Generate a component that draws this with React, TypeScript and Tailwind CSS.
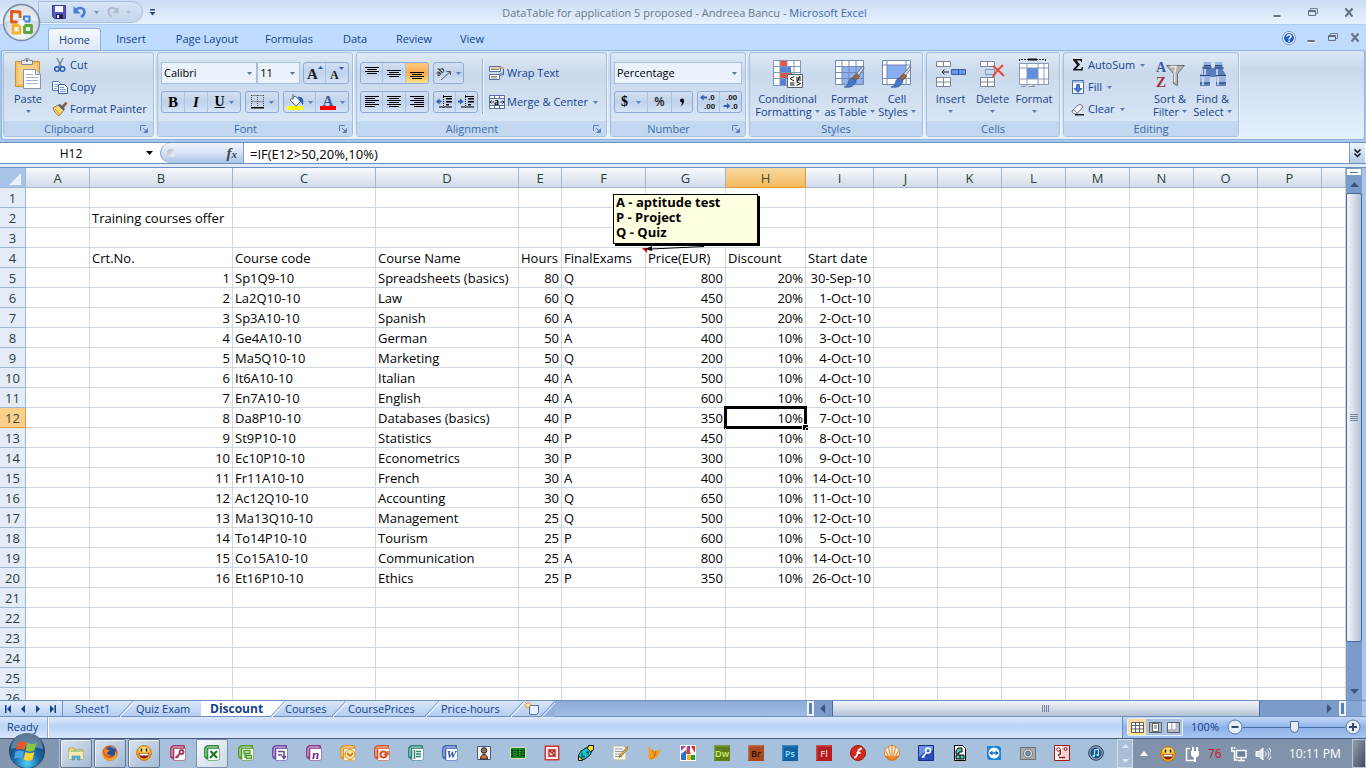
import { useState } from "react";
import type { ReactNode } from "react";

const ribbonTabs = [
  { label: "Home", width: "w-[53px]" },
  { label: "Insert", width: "w-[60px]" },
  { label: "Page Layout", width: "w-[92px]" },
  { label: "Formulas", width: "w-[72px]" },
  { label: "Data", width: "w-[60px]" },
  { label: "Review", width: "w-[58px]" },
  { label: "View", width: "w-[58px]" },
];

const columns = [
  { name: "A", width: "w-16" },
  { name: "B", width: "w-[143px]" },
  { name: "C", width: "w-[143px]" },
  { name: "D", width: "w-[143px]" },
  { name: "E", width: "w-[43px]" },
  { name: "F", width: "w-[84px]" },
  { name: "G", width: "w-20" },
  { name: "H", width: "w-20" },
  { name: "I", width: "w-[68px]" },
  { name: "J", width: "w-16" },
  { name: "K", width: "w-16" },
  { name: "L", width: "w-16" },
  { name: "M", width: "w-16" },
  { name: "N", width: "w-16" },
  { name: "O", width: "w-16" },
  { name: "P", width: "w-16" },
  { name: "", width: "w-auto" },
];

const courses = [
  ["1", "Sp1Q9-10", "Spreadsheets (basics)", "80", "Q", "800", "20%", "30-Sep-10"],
  ["2", "La2Q10-10", "Law", "60", "Q", "450", "20%", "1-Oct-10"],
  ["3", "Sp3A10-10", "Spanish", "60", "A", "500", "20%", "2-Oct-10"],
  ["4", "Ge4A10-10", "German", "50", "A", "400", "10%", "3-Oct-10"],
  ["5", "Ma5Q10-10", "Marketing", "50", "Q", "200", "10%", "4-Oct-10"],
  ["6", "It6A10-10", "Italian", "40", "A", "500", "10%", "4-Oct-10"],
  ["7", "En7A10-10", "English", "40", "A", "600", "10%", "6-Oct-10"],
  ["8", "Da8P10-10", "Databases (basics)", "40", "P", "350", "10%", "7-Oct-10"],
  ["9", "St9P10-10", "Statistics", "40", "P", "450", "10%", "8-Oct-10"],
  ["10", "Ec10P10-10", "Econometrics", "30", "P", "300", "10%", "9-Oct-10"],
  ["11", "Fr11A10-10", "French", "30", "A", "400", "10%", "14-Oct-10"],
  ["12", "Ac12Q10-10", "Accounting", "30", "Q", "650", "10%", "11-Oct-10"],
  ["13", "Ma13Q10-10", "Management", "25", "Q", "500", "10%", "12-Oct-10"],
  ["14", "To14P10-10", "Tourism", "25", "P", "600", "10%", "5-Oct-10"],
  ["15", "Co15A10-10", "Communication", "25", "A", "800", "10%", "14-Oct-10"],
  ["16", "Et16P10-10", "Ethics", "25", "P", "350", "10%", "26-Oct-10"],
];

const headings = ["Crt.No.", "Course code", "Course Name", "Hours", "FinalExams", "Price(EUR)", "Discount", "Start date"];

// columns B, E, G, H and I hold numbers or dates
const rightAligned = [1, 4, 6, 7, 8];

function cellText(row: number, col: number) {
  if (row === 2 && col === 1) return "Training courses offer";
  if (row === 4) return headings[col - 1] ?? "";
  if (row >= 5 && row <= 20) return courses[row - 5][col - 1] ?? "";
  return "";
}

function Svg({ w = 16, h = 16, className = "", children }: { w?: number; h?: number; className?: string; children: ReactNode }) {
  return (
    <svg width={w} height={h} viewBox={`0 0 ${w} ${h}`} className={`shrink-0 ${className}`} aria-hidden="true">
      {children}
    </svg>
  );
}

function Caret({ color = "#5b7fb5" }: { color?: string }) {
  return (
    <Svg w={5} h={3}>
      <path d="M0 0h5L2.500 3z" fill={color} />
    </Svg>
  );
}

/* ---------- window chrome ---------- */

function OfficeButton() {
  return (
    <button type="button" aria-label="Office Button" className="absolute left-0.5 top-[3px] z-10">
      <Svg w={39} h={39}>
        <defs>
          <radialGradient id="orb" cx="50%" cy="75%" r="75%">
            <stop offset="0" stopColor="#ffffff" />
            <stop offset="0.5" stopColor="#d9e0ea" />
            <stop offset="1" stopColor="#aab8cc" />
          </radialGradient>
        </defs>
        <circle cx="19.500" cy="19.500" r="18" fill="url(#orb)" stroke="#7c8ba5" strokeWidth="1.500" />
        <path d="M3 19a16.500 16.500 0 0 1 33 0c-8-4-25-4-33 0z" fill="#fff" opacity="0.55" />
        <g fill="none" strokeWidth="2.800" strokeLinejoin="round">
          <path d="M18 15V9l-8.500-.500V19h6" stroke="#dd5a1b" />
          <path d="M22 18.500v-5h5.500v5z" stroke="#3f86d4" strokeWidth="2.200" />
          <path d="M11 22.500h7v7.500h-7z" stroke="#f4b32c" />
          <path d="M22.500 22.500h7v7h-7z" stroke="#5da63a" />
        </g>
        <path d="M17.500 17.500h5v5h-5z" fill="#fff" />
      </Svg>
    </button>
  );
}

function WindowControls({ small = false }: { small?: boolean }) {
  return (
    <div className={small ? "flex items-center gap-2.5" : "flex items-center gap-6"}>
      <button type="button" aria-label="Minimize">
        <Svg w={12} h={11}>
          <path d="M2.500 8h7v2h-7z" fill="#666f7d" />
          <path d="M2.500 10h7v1h-7z" fill="#fff" />
        </Svg>
      </button>
      <button type="button" aria-label="Restore">
        <Svg w={12} h={11}>
          <path d="M3.500 3.500v-2h7v5h-2" fill="none" stroke="#77808e" />
          <path d="M1.500 3.500h7v5h-7zM1.500 4.500h7" fill="none" stroke="#666f7d" />
        </Svg>
      </button>
      <button type="button" aria-label="Close">
        <Svg w={12} h={11}>
          <path d="M2.500 1.500l7 8M9.500 1.500l-7 8" stroke="#666f7d" strokeWidth="2" />
        </Svg>
      </button>
    </div>
  );
}

function TitleBar() {
  return (
    <div className="flex h-[25px] shrink-0 items-center border-b border-[#a9cdf2] bg-linear-to-b from-[#cbddf6] to-[#e6f1fd]">
      <div className="flex w-[165px] shrink-0 items-center">
        <div className="ml-[38px] flex h-[22px] w-[105px] items-center rounded-r-full border border-[#a9bfdc] bg-linear-to-b from-[#d6e4f6] to-[#c4d6ee] pl-[13px]">
          <button type="button" aria-label="Save">
            <Svg w={14} h={14}>
              <path d="M0.500 0.500h13v13h-11l-2-2z" fill="#5a59c4" stroke="#3a3a93" />
              <path d="M3 1h8v6H3z" fill="#f4f7ff" />
              <path d="M4 9h7v5H4z" fill="#23234f" />
              <path d="M5 10h2v3H5z" fill="#e8ebf5" />
            </Svg>
          </button>
          <button type="button" aria-label="Undo" className="ml-[7px]">
            <Svg w={14} h={14}>
              <path d="M3 4.500c3-2.500 8.500-2 8.500 2.500 0 2.500-2 4-3.500 5" fill="none" stroke="#4b7bd0" strokeWidth="2.500" />
              <path d="M0.500 1v7.500h7z" fill="#4b7bd0" />
            </Svg>
          </button>
          <button type="button" aria-label="Undo list" className="ml-[7px]">
            <Caret color="#6f8fbd" />
          </button>
          <button type="button" aria-label="Redo" className="ml-[7px]">
            <Svg w={14} h={14}>
              <path d="M10.500 4.500c-3-2.500-8-2-8 2 0 2.500 1.500 4 3 5" fill="none" stroke="#b0bccd" strokeWidth="2" />
              <path d="M12.500 1.500v6.500H6.500z" fill="#b0bccd" />
            </Svg>
          </button>
          <button type="button" aria-label="Redo list" className="ml-1.5">
            <Caret color="#b0bccd" />
          </button>
        </div>
        <button type="button" aria-label="Customize Quick Access Toolbar" className="ml-1.5">
          <Svg w={7} h={7}>
            <path d="M1 0h5v1.500H1zM0.500 3h6L3.500 6.500z" fill="#2c4a86" />
          </Svg>
        </button>
      </div>
      <h1 className="flex-1 truncate pt-0.5 text-center text-[11px] leading-4 text-[#6d7786]">
        DataTable for application 5 proposed - Andreea Bancu - <span className="text-[#3e6aaa]">Microsoft Excel</span>
      </h1>
      <div className="flex w-[162px] shrink-0 justify-end pr-[11px]">
        <WindowControls />
      </div>
    </div>
  );
}

function TabStrip() {
  return (
    <div className="flex h-[25px] shrink-0 items-end justify-between bg-[#bfdbff] pl-12">
      <div role="tablist" className="flex h-[22px]">
        {ribbonTabs.map((tab, i) => (
          <button
            key={tab.label}
            type="button"
            role="tab"
            aria-selected={i === 0}
            className={`${tab.width} text-center text-[11px] leading-5 ${
              i === 0
                ? "rounded-t-[3px] border border-b-0 border-[#8db2e3] bg-linear-to-b from-[#f4f9ff] to-[#dde8f5] text-[#15428b] shadow-[inset_0_1px_0_#fff]"
                : "text-[#15428b]"
            }`}
          >
            {tab.label}
          </button>
        ))}
      </div>
      <div className="flex h-full items-center gap-[9px] pr-[5px]">
        <button type="button" aria-label="Help">
          <Svg w={14} h={14}>
            <circle cx="7" cy="7" r="6.500" fill="#fff" stroke="#6c93cf" />
            <circle cx="7" cy="7" r="5" fill="#1f5fc9" />
            <path d="M5 5.500c0-2.500 4-2.500 4 0 0 1.300-2 1.500-2 3" fill="none" stroke="#fff" strokeWidth="1.500" />
            <path d="M6.250 9.500h1.500V11h-1.500z" fill="#fff" />
          </Svg>
        </button>
        <WindowControls small />
      </div>
    </div>
  );
}

/* ---------- ribbon ---------- */

function Group({ title, width, launcher = false, children }: { title: string; width: string; launcher?: boolean; children: ReactNode }) {
  return (
    <section
      aria-label={title}
      className={`${width} flex shrink-0 flex-col overflow-hidden rounded-[3px] border border-[#a5bfdd] bg-linear-to-b from-[#dfe9f5] via-[#c9d9ec] via-25% to-[#dce9f8] shadow-[1px_1px_0_#eef5fd]`}
    >
      <div className="flex min-h-0 flex-1 items-start">{children}</div>
      <div className="flex h-[15px] shrink-0 items-center bg-[#c1d8f0]">
        <span className="flex-1 text-center text-[11px] leading-[15px] text-[#3e6aaa]">{title}</span>
        {launcher && (
          <button type="button" aria-label={`${title} options`} className="ml-1.5 mr-[5px]">
            <Svg w={8} h={8}>
              <path d="M0.500 6V0.500H6" fill="none" stroke="#5f7fb0" />
              <path d="M3 3l3 3M7.500 3.500v4h-4" fill="none" stroke="#5f7fb0" />
              <path d="M7 4v3H4z" fill="#5f7fb0" />
            </Svg>
          </button>
        )}
      </div>
    </section>
  );
}

function Cluster({ children }: { children: ReactNode }) {
  return (
    <div className="flex h-[22px] shrink-0 divide-x divide-[#a9c3e2] overflow-hidden rounded-[3px] border border-[#8fabd3] bg-linear-to-b from-[#d3e1f2] via-[#bfd2ea] to-[#d5e4f7]">
      {children}
    </div>
  );
}

function ToolButton({ label, width, active = false, children }: { label: string; width: string; active?: boolean; children: ReactNode }) {
  return (
    <button
      type="button"
      aria-label={label}
      className={`${width} flex h-full items-center justify-center gap-1 ${active ? "bg-linear-to-b from-[#fcc883] via-[#fbab45] to-[#fee08b]" : ""}`}
    >
      {children}
    </button>
  );
}

function SmallButton({ label, caret = false, children }: { label: string; caret?: boolean; children: ReactNode }) {
  return (
    <button type="button" className="flex h-[22px] items-center text-[11px] whitespace-nowrap text-[#15428b]">
      {children}
      <span className="ml-0.5">{label}</span>
      {caret && (
        <span className="ml-[5px]">
          <Caret />
        </span>
      )}
    </button>
  );
}

function BigButton({ lines, width, children }: { lines: string[]; width: string; children: ReactNode }) {
  return (
    <button type="button" className={`${width} flex shrink-0 flex-col items-center pt-[3px] text-[11px] leading-[13px] text-[#15428b]`}>
      <span className="flex h-9 items-center">{children}</span>
      <span className="whitespace-nowrap">{lines[0]}</span>
      <span className="flex h-[13px] items-center gap-[3px] whitespace-nowrap">
        {lines[1]}
        <Caret />
      </span>
    </button>
  );
}

function DropDown({ label, value, width }: { label: string; value: string; width: string }) {
  return (
    <div className={`${width} relative flex h-[22px] items-center border border-[#a9c1de] bg-[#eaf2fb]`}>
      <select aria-label={label} defaultValue={value} className="h-full w-full appearance-none bg-transparent pl-0.5 text-[11px] text-black outline-none">
        <option>{value}</option>
      </select>
      <span className="pointer-events-none absolute inset-y-0 right-1 flex items-center">
        <Caret color="#55749f" />
      </span>
    </div>
  );
}

function Lines({ rows }: { rows: number[][] }) {
  return (
    <Svg w={16} h={14}>
      {rows.map(([x, y, w]) => (
        <path key={y} d={`M${x} ${y}h${w}v1h-${w}z`} fill="#000" />
      ))}
    </Svg>
  );
}

function ClipboardGroup() {
  return (
    <Group title="Clipboard" width="w-[151px]" launcher>
      <BigButton lines={["Paste", ""]} width="w-[48px]">
        <Svg w={28} h={32}>
          <path d="M1.500 3.500h24v25h-24z" fill="#f3c063" stroke="#c98f34" />
          <path d="M4 6h19v20H4z" fill="#f8d084" />
          <path d="M7.500 2.500h3c0-3 5-3 5 0h3v4h-11z" fill="#e8ebf0" stroke="#7d8796" />
          <circle cx="13" cy="2.500" r="1.200" fill="#5a6473" />
          <path d="M9.500 11.500h12l5 5v14h-17z" fill="#fff" stroke="#8794ab" />
          <path d="M21.500 11.500v5h5" fill="#dce5f2" stroke="#8794ab" />
          <path d="M12 16.500h7M12 19.500h12M12 22.500h12M12 25.500h12" stroke="#9fb3d3" />
        </Svg>
      </BigButton>
      <div className="flex flex-col pt-px">
        <SmallButton label="Cut">
          <Svg>
            <path d="M5 1l4.500 9M11 1L6.500 10" stroke="#76869c" strokeWidth="1.500" />
            <circle cx="5" cy="12" r="2.300" fill="none" stroke="#2f5eb5" strokeWidth="1.500" />
            <circle cx="10.500" cy="12" r="2.300" fill="none" stroke="#2f5eb5" strokeWidth="1.500" />
          </Svg>
        </SmallButton>
        <SmallButton label="Copy">
          <Svg>
            <path d="M0.500 2.500h6l2 2v7h-8z" fill="#fff" stroke="#4b74b8" />
            <path d="M2 5.500h4M2 7.500h4M2 9.500h3" stroke="#8fadd9" />
            <path d="M6.500 5.500h6l3 3v6h-9z" fill="#fff" stroke="#345c9f" />
            <path d="M8 8.500h4M8 10.500h6M8 12.500h6" stroke="#6f93cb" />
          </Svg>
        </SmallButton>
        <SmallButton label="Format Painter">
          <Svg>
            <path d="M1 7l5-3 6 5-5 6c-2-1-5-4-6-8z" fill="#f3d572" stroke="#9b7a2b" />
            <path d="M3 8l4 5" stroke="#c79e38" />
            <path d="M6 4l2-1 5 5-1.500 1.500z" fill="#49597b" />
            <path d="M9.500 5l4-4 2 1-3.500 5z" fill="#8c5b33" />
          </Svg>
        </SmallButton>
      </div>
    </Group>
  );
}

function FontGroup() {
  return (
    <Group title="Font" width="w-[196px]" launcher>
      <div className="flex w-full flex-col gap-[7px] px-[3px] pt-[9px]">
        <div className="flex">
          <DropDown label="Font" value="Calibri" width="w-[97px]" />
          <DropDown label="Font size" value="11" width="w-[43px]" />
          <div className="ml-[3px]">
            <Cluster>
              <ToolButton label="Grow font" width="w-[22px]">
                <Svg w={20} h={18}>
                  <text x="2" y="15" fontSize="15" fontWeight="700" fontFamily="Liberation Serif" fill="#222">A</text>
                  <path d="M13 5l2.500-3L18 5z" fill="#2f5eb5" />
                </Svg>
              </ToolButton>
              <ToolButton label="Shrink font" width="w-[22px]">
                <Svg w={20} h={18}>
                  <text x="3" y="15" fontSize="12" fontWeight="700" fontFamily="Liberation Serif" fill="#222">A</text>
                  <path d="M12 3h5l-2.500 3z" fill="#2f5eb5" />
                </Svg>
              </ToolButton>
            </Cluster>
          </div>
        </div>
        <div className="flex gap-1">
          <Cluster>
            <ToolButton label="Bold" width="w-[23px]">
              <b className="font-['Liberation_Serif',serif] text-[15px] leading-none text-black">B</b>
            </ToolButton>
            <ToolButton label="Italic" width="w-[23px]">
              <b className="font-['Liberation_Serif',serif] text-[15px] leading-none text-black italic">I</b>
            </ToolButton>
            <ToolButton label="Underline" width="w-8">
              <b className="font-['Liberation_Serif',serif] text-[14px] leading-none text-black underline">U</b>
              <Caret />
            </ToolButton>
          </Cluster>
          <Cluster>
            <ToolButton label="Borders" width="w-8">
              <Svg w={14} h={14}>
                <path d="M0.500 0.500h12M0.500 6.500h12M0.500 0v13M6.500 0v13M12.500 0v13" stroke="#444" strokeDasharray="1 1" />
                <path d="M0 12h13v1.500H0z" fill="#000" />
              </Svg>
              <Caret />
            </ToolButton>
          </Cluster>
          <Cluster>
            <ToolButton label="Fill color" width="w-8">
              <Svg w={17} h={16}>
                <path d="M3 6l5-4 6 5-5 5z" fill="#f5f8fd" stroke="#5b6b84" />
                <path d="M6 0v6" stroke="#5b6b84" />
                <path d="M11 3c5-1 6 4 5 8-1.500-1-1.500-4-4-4.500z" fill="#2f5eb5" />
                <path d="M0 12h16v4H0z" fill="#ffff00" />
              </Svg>
              <Caret />
            </ToolButton>
            <ToolButton label="Font color" width="w-8">
              <Svg w={16} h={16}>
                <text x="2.500" y="11.500" fontSize="15" fontWeight="700" fontFamily="Liberation Serif" fill="#3b5f9f">A</text>
                <path d="M0 12h16v4H0z" fill="#ff0000" />
              </Svg>
              <Caret />
            </ToolButton>
          </Cluster>
        </div>
      </div>
    </Group>
  );
}

function IndentIcon({ flip = false }: { flip?: boolean }) {
  return (
    <Svg w={18} h={16}>
      <path d="M7 2h9v1H7zM10 4h6v1.500h-6zM10 7h6v1.500h-6zM10 10h3v1.500h-3zM3 12.500h13v1H3z" fill="#000" />
      <path d="M7.500 1v14" stroke="#000" strokeDasharray="1 1" />
      <path d={flip ? "M5.500 7.500L2 4.500v2H0v2h2v2z" : "M0 7.500l3.500-3v2h2v2h-2v2z"} fill="#2f5eb5" />
    </Svg>
  );
}

function AlignmentGroup() {
  return (
    <Group title="Alignment" width="w-[251px]" launcher>
      <div className="flex flex-col gap-[7px] pl-[3px] pt-[9px]">
        <div className="flex gap-1">
          <Cluster>
            <ToolButton label="Top align" width="w-[22px]">
              <Lines rows={[[1, 1, 14], [3, 3, 10], [1, 5, 14], [3, 7, 10]]} />
            </ToolButton>
            <ToolButton label="Middle align" width="w-[23px]">
              <Lines rows={[[1, 4, 14], [3, 6, 10], [1, 8, 14], [3, 10, 10]]} />
            </ToolButton>
            <ToolButton label="Bottom align" width="w-[22px]" active>
              <Lines rows={[[1, 6, 14], [3, 8, 10], [1, 10, 14], [3, 12, 10]]} />
            </ToolButton>
          </Cluster>
          <Cluster>
            <ToolButton label="Orientation" width="w-[29px]">
              <Svg w={16} h={16}>
                <text x="1" y="10" fontSize="9" fontWeight="700" fontFamily="Liberation Serif" fill="#333" transform="rotate(-45 4 9)">ab</text>
                <path d="M5 15l9-8M10.500 6.500h4V10" fill="none" stroke="#555" />
              </Svg>
              <Caret />
            </ToolButton>
          </Cluster>
        </div>
        <div className="flex gap-1">
          <Cluster>
            <ToolButton label="Align left" width="w-[22px]">
              <Lines rows={[[1, 1, 14], [1, 3, 10], [1, 5, 14], [1, 7, 10], [1, 9, 14], [1, 11, 10]]} />
            </ToolButton>
            <ToolButton label="Center" width="w-[23px]">
              <Lines rows={[[1, 1, 14], [3, 3, 10], [1, 5, 14], [3, 7, 10], [1, 9, 14], [3, 11, 10]]} />
            </ToolButton>
            <ToolButton label="Align right" width="w-[22px]">
              <Lines rows={[[1, 1, 14], [5, 3, 10], [1, 5, 14], [5, 7, 10], [1, 9, 14], [5, 11, 10]]} />
            </ToolButton>
          </Cluster>
          <Cluster>
            <ToolButton label="Decrease indent" width="w-[22px]">
              <IndentIcon />
            </ToolButton>
            <ToolButton label="Increase indent" width="w-[21px]">
              <IndentIcon flip />
            </ToolButton>
          </Cluster>
        </div>
      </div>
      <div className="ml-1 mt-1.5 h-[55px] w-0.5 border-l border-[#9ab4d6] bg-[#f0f6fd]" />
      <div className="flex flex-col gap-[7px] pl-[5px] pt-[9px]">
        <SmallButton label="Wrap Text">
          <Svg>
            <path d="M0.500 1.500h11v5h-11zM0.500 9.500h10v5h-10z" fill="#fff" stroke="#56719e" />
            <path d="M2 3h13" stroke="#d08a3a" />
            <path d="M2 4.500h8M2 11.500h6M2 13h6" stroke="#8a8a8a" />
            <path d="M14.500 4v5.500h-2M13 7.500l-2 2 2 2" fill="none" stroke="#2f5eb5" />
          </Svg>
        </SmallButton>
        <SmallButton label="Merge & Center" caret>
          <Svg>
            <path d="M0.500 1.500h15v13h-15zM0.500 4.500h15M0.500 11.500h15M5.500 1.500v3M10.500 1.500v3M5.500 11.500v3M10.500 11.500v3" fill="#fff" stroke="#56719e" />
            <path d="M1 5h14v6H1z" fill="#dbe8fb" />
            <text x="5" y="10.500" fontSize="10" fontWeight="700" fontFamily="Liberation Serif" fill="#000">a</text>
            <path d="M1 8h4M11 8h4M2.500 6.500l-1.500 1.500 1.500 1.500M13.500 6.500l1.500 1.500-1.500 1.500" fill="none" stroke="#333" />
          </Svg>
        </SmallButton>
      </div>
    </Group>
  );
}

function NumberGroup() {
  return (
    <Group title="Number" width="w-[136px]" launcher>
      <div className="flex w-full flex-col gap-[7px] px-[3px] pt-[9px]">
        <DropDown label="Number format" value="Percentage" width="w-full" />
        <div className="flex gap-1">
          <Cluster>
            <ToolButton label="Accounting format" width="w-[33px]">
              <b className="mr-1 font-['Liberation_Serif',serif] text-[14px] leading-none text-black">$</b>
              <Caret />
            </ToolButton>
            <ToolButton label="Percent style" width="w-6">
              <span className="text-[12px] font-semibold leading-none text-[#222]">%</span>
            </ToolButton>
            <ToolButton label="Comma style" width="w-5">
              <Svg w={6} h={9}>
                <circle cx="3" cy="2.500" r="2" fill="#000" />
                <path d="M5 2.500c0 3-1 4.500-3.500 6 1-1.500 1.500-2.500 1.500-4z" fill="#000" />
              </Svg>
            </ToolButton>
          </Cluster>
          <Cluster>
            <ToolButton label="Increase decimal" width="w-[22px]">
              <Svg w={18} h={20}>
                <path d="M0 5.500L3.500 2.500v2H7v2H3.500v2z" fill="#2f5eb5" />
                <text x="8" y="8" fontSize="8" fontWeight="700" fontFamily="Liberation Sans" fill="#111">.0</text>
                <text x="4" y="17" fontSize="8" fontWeight="700" fontFamily="Liberation Sans" fill="#111">.00</text>
              </Svg>
            </ToolButton>
            <ToolButton label="Decrease decimal" width="w-[21px]">
              <Svg w={18} h={20}>
                <text x="4" y="8" fontSize="8" fontWeight="700" fontFamily="Liberation Sans" fill="#111">.00</text>
                <path d="M8.500 14L5 11v2H1.500v2H5v2z" fill="#2f5eb5" />
                <text x="9" y="17" fontSize="8" fontWeight="700" fontFamily="Liberation Sans" fill="#111">.0</text>
              </Svg>
            </ToolButton>
          </Cluster>
        </div>
      </div>
    </Group>
  );
}

function Brush() {
  return (
    <g>
      <path d="M29 7l1 2-8 12-3-2z" fill="#d5dae3" stroke="#5b6577" strokeWidth="0.800" />
      <path d="M22.500 14.500l3 2.500-3.500 4.500-3.500-2.500z" fill="#9a6a3a" stroke="#6d4824" strokeWidth="0.700" />
      <path d="M18 19l4 3c-2 6-7 7-12 6 3-1 4-2 4.500-5 .500-2 2-3.500 3.500-4z" fill="#4778c8" stroke="#2e559c" strokeWidth="0.700" />
    </g>
  );
}

function StylesGroup() {
  return (
    <Group title="Styles" width="w-[174px]">
      <BigButton lines={["Conditional", "Formatting"]} width="w-[75px]">
        <Svg w={32} h={30}>
          <path d="M1.500 1.500h27v25h-27z" fill="#fff" />
          <path d="M8 1.500h7v6H8z" fill="#e4553d" />
          <path d="M8 8h11v6H8z" fill="#5480d8" />
          <path d="M8 14h12v6H8z" fill="#e4553d" />
          <path d="M8 20h6v6.500H8z" fill="#5480d8" />
          <path d="M1.500 1.500h27v25h-27zM1.500 7.500h27M1.500 13.500h27M1.500 19.500h27M8 1.500v25M15 1.500v25M22 1.500v25" fill="none" stroke="#8195b5" />
          <path d="M15.500 15.500h15v13h-15z" fill="#fff" stroke="#555e6c" />
          <path d="M22 17.500l-4 2 4 2.500M18 24h4.500M18 26h4.500M24 19h5M24 21h5M28 17l-3 6M24.500 23l4 1.500-4 2" fill="none" stroke="#111" />
        </Svg>
      </BigButton>
      <BigButton lines={["Format", "as Table"]} width="w-[49px]">
        <Svg w={32} h={30}>
          <path d="M1.500 1.500h28v24h-28z" fill="#fff" />
          <path d="M8 7.500h21.500v18H8z" fill="#8fb0ee" />
          <path d="M1.500 1.500h28v24h-28zM1.500 7.500h28M1.500 13.500h28M1.500 19.500h28M8 1.500v24M15 1.500v24M22 1.500v24" fill="none" stroke="#7189b3" />
          <Brush />
        </Svg>
      </BigButton>
      <BigButton lines={["Cell", "Styles"]} width="w-[46px]">
        <Svg w={32} h={30}>
          <path d="M1.500 1.500h28v24h-28z" fill="#fff" />
          <path d="M6 6h19v14H6z" fill="#87aef0" />
          <path d="M1.500 1.500h28v24h-28zM1.500 6h28M1.500 19.500h28M6 1.500v24M25 1.500v24" fill="none" stroke="#7189b3" />
          <Brush />
        </Svg>
      </BigButton>
    </Group>
  );
}

function CellsGroup() {
  return (
    <Group title="Cells" width="w-[134px]">
      <BigButton lines={["Insert", ""]} width="w-[47px]">
        <Svg w={32} h={28}>
          <path d="M1.500 1.500h14v5h-14zM8.500 1.500v5M1.500 17.500h14v9h-14zM1.500 22h14M8.500 17.500v9" fill="#fff" stroke="#7b8698" />
          <path d="M16.500 9.500h14v5h-14zM23.500 9.500v5" fill="#6a96e3" stroke="#3a5fa5" />
          <path d="M7 12h7M9.500 9.500L7 12l2.500 2.500" fill="none" stroke="#222" />
        </Svg>
      </BigButton>
      <BigButton lines={["Delete", ""]} width="w-[37px]">
        <Svg w={28} h={28}>
          <path d="M1.500 1.500h14v5h-14zM8.500 1.500v5M1.500 17.500h14v9h-14zM1.500 22h14M8.500 17.500v9" fill="#fff" stroke="#7b8698" />
          <path d="M6.500 9.500h9v5h-9z" fill="none" stroke="#35558f" strokeDasharray="1 1" />
          <path d="M14 6c4 3 7 6 11 10M24 5c-4 4-8 7-10 12" fill="none" stroke="#e8432e" strokeWidth="2" />
        </Svg>
      </BigButton>
      <BigButton lines={["Format", ""]} width="w-[46px]">
        <Svg w={32} h={32}>
          <path d="M1.500 3v-2.500M27.500 3v-2.500M3 1.500h23" stroke="#333" strokeDasharray="2 1" />
          <path d="M10 1.500h9" stroke="#111" strokeWidth="2" />
          <path d="M3 28.500h5l2-2h4l3 2h-7" fill="#fff" stroke="#8a94a5" />
          <path d="M1.500 5.500h29v21h-29z" fill="#fff" />
          <path d="M9 10h11v11H9z" fill="#5f8de0" />
          <path d="M1.500 5.500h29v21h-29zM1.500 10h29M1.500 21h29M9 5.500v21M20 5.500v21M26 5.500v21" fill="none" stroke="#8a99b3" />
        </Svg>
      </BigButton>
    </Group>
  );
}

function EditingGroup() {
  return (
    <Group title="Editing" width="w-[176px]">
      <div className="flex w-[83px] flex-col pl-1.5 pt-px">
        <SmallButton label="AutoSum" caret>
          <Svg>
            <path d="M3 2h9v3h-1c0-1-.500-1.500-1.500-1.500H6.500L10 7.500 6 12h4c1 0 1.500-.500 2-2h1l-.500 3.500H3v-1L7 8 3 3z" fill="#111" />
          </Svg>
        </SmallButton>
        <SmallButton label="Fill" caret>
          <Svg>
            <path d="M2.500 1.500h11v13h-11z" fill="#fff" stroke="#4b6ca6" />
            <path d="M3 2h10v2H3z" fill="#a7c3ef" />
            <path d="M6.500 5.500h3v4h2.500L8 13.500 4 9.500h2.500z" fill="#3f78d8" stroke="#244f9e" strokeWidth="0.700" />
          </Svg>
        </SmallButton>
        <SmallButton label="Clear" caret>
          <Svg>
            <path d="M2 10l6-6c1.500-1 5 0 5 2l-6 6.500c-2 1-5 0-5-2.500z" fill="#f7f8fa" stroke="#6b7686" />
            <path d="M2 10c1-1.500 4-.500 5 2.500" fill="none" stroke="#6b7686" />
            <path d="M5 13h9v1.500H5z" fill="#222" />
          </Svg>
        </SmallButton>
      </div>
      <BigButton lines={["Sort &", "Filter"]} width="w-[46px]">
        <Svg w={30} h={32}>
          <text x="1" y="14" fontSize="14" fontWeight="700" fontFamily="Liberation Serif" fill="#3a5ba6">A</text>
          <text x="1" y="29" fontSize="15" fontWeight="700" fontFamily="Liberation Serif" fill="#a33434">Z</text>
          <path d="M11.500 7.500h18l-7 8v12l-4-2v-10z" fill="#b4b4b4" stroke="#6f6f6f" />
          <path d="M15 8.500h6l-1.500 6.500v9" fill="none" stroke="#ececec" strokeWidth="1.500" />
        </Svg>
      </BigButton>
      <BigButton lines={["Find &", "Select"]} width="w-[39px]">
        <Svg w={30} h={28}>
          <path d="M6 2h7v4l1 2h2l1-2V2h7l1 8 3 5v11h-10v-9h-6v9H2V15l3-5z" fill="#5c7fbc" />
          <path d="M6 2h7v3H6zM17 2h7v3h-7zM2 16h10v6H2zM18 16h10v6H18z" fill="#9bb5df" />
          <path d="M4 8h9M17 8h9M2 15.500h10M18 15.500h10M2 23h10M18 23h10M6 5.500h7M17 5.500h7" stroke="#2f4879" />
          <path d="M4 11v4M7 9v6M5 17v8M20 17v8M19 9v6" stroke="#dce7f8" strokeWidth="1.500" />
        </Svg>
      </BigButton>
    </Group>
  );
}

function Ribbon() {
  return (
    <div className="shrink-0 bg-[#a8c8ee] px-px pb-0.5">
      <div className="flex h-[90px] gap-[3px] overflow-hidden rounded-[3px] border border-[#8db2e3] bg-linear-to-b from-[#dbe6f4] via-[#c9d9ed] via-20% to-[#e4f2ff] px-px pt-px pb-0.5">
        <ClipboardGroup />
        <FontGroup />
        <AlignmentGroup />
        <NumberGroup />
        <StylesGroup />
        <CellsGroup />
        <EditingGroup />
      </div>
    </div>
  );
}

/* ---------- worksheet ---------- */

function FormulaBar() {
  return (
    <div className="flex h-[26px] shrink-0 flex-col border-b border-[#6d8fbb] bg-[#dfebfa]">
      <div className="flex h-[22px] border-y border-[#6d8fbb] bg-white">
        <div className="flex w-[158px] items-center">
          <input aria-label="Name Box" defaultValue="H12" className="w-[142px] pt-0.5 text-center text-[12px] leading-4 text-black outline-none" />
        </div>
        <button type="button" aria-label="Named ranges" className="-ml-3 w-3">
          <Svg w={7} h={4}>
            <path d="M0 0h7L3.500 4z" fill="#000" />
          </Svg>
        </button>
        <div className="ml-0.5 flex w-[84px] items-center justify-between rounded-l-full border border-y-0 border-[#7d9cc6] bg-linear-to-b from-[#eef4fc] via-[#d5e2f4] to-[#a9c2e6] px-1.5">
          <span className="size-2 rounded-full bg-linear-to-br from-[#a6b2c4] to-white" />
          <button type="button" aria-label="Insert Function" className="font-['Liberation_Serif',serif] text-[15px] leading-none font-bold text-[#3c4657] italic">
            f<span className="text-[11px]">x</span>
          </button>
        </div>
        <input aria-label="Formula" defaultValue="=IF(E12>50,20%,10%)" className="flex-1 pl-1.5 pt-px text-[13px] leading-4 text-black outline-none" />
        <button type="button" aria-label="Expand Formula Bar" className="mr-px flex w-4 items-center justify-center border-l border-[#7d9cc6] bg-linear-to-b from-[#eef4fc] to-[#b3caea]">
          <Svg w={7} h={9}>
            <path d="M0.500 0.500l3 3 3-3M0.500 4.500l3 3 3-3" fill="none" stroke="#000" strokeWidth="1.500" />
          </Svg>
        </button>
      </div>
    </div>
  );
}

function CommentNote() {
  return (
    <div className="pointer-events-none absolute left-[613px] top-[26px]">
      <div className="h-[50px] w-[145px] border border-black bg-[#ffffe1] pl-0.5 text-[13px] leading-[15px] font-bold text-black shadow-[2px_2px_0_#000]">
        <p>A - aptitude test</p>
        <p>P - Project</p>
        <p>Q - Quiz</p>
      </div>
      <Svg w={100} h={12} className="absolute left-[26px] top-[48px]">
        <path d="M3 6h5v5z" fill="#e00000" />
        <path d="M6 7l7-3v5z" fill="#000" />
        <path d="M12 7L65 4.500" stroke="#000" />
      </Svg>
    </div>
  );
}

function Sheet() {
  const rows = Array.from({ length: 26 }, (_, i) => i + 1);
  return (
    <div className="relative min-w-0 flex-1 overflow-hidden bg-white">
      <table className="w-full table-fixed border-separate border-spacing-0 text-[13px] leading-[17px]">
        <colgroup>
          <col className="w-[26px]" />
          {columns.map((c) => (
            <col key={c.name} className={c.width} />
          ))}
        </colgroup>
        <thead>
          <tr className="h-5">
            <th className="border-r border-b border-[#9eb6ce] bg-[#a9c4e9] p-0">
              <Svg w={24} h={18} className="block">
                <path d="M21 4v12H9z" fill="#eaf1fa" />
              </Svg>
            </th>
            {columns.map((c) => (
              <th
                key={c.name}
                scope="col"
                className={`h-5 border-r border-b px-0 pt-0.5 pb-0 font-normal ${
                  c.name === "H"
                    ? "border-[#f29536] bg-linear-to-b from-[#f9d99f] to-[#f1ba5c] text-[#3b4a36]"
                    : "border-[#9eb6ce] bg-linear-to-b from-[#f7fafd] to-[#d3dbe9] text-[#27413e]"
                }`}
              >
                {c.name}
              </th>
            ))}
          </tr>
        </thead>
        <tbody>
          {rows.map((row) => (
            <tr key={row} className="h-5">
              <th
                scope="row"
                className={`border-r border-b px-0 pt-0.5 pb-0 font-normal ${
                  row === 12 ? "border-[#f29536] bg-[#fad08c] text-[#3b4a36]" : "border-[#9eb6ce] bg-[#e4ecf7] text-[#27413e]"
                }`}
              >
                {row}
              </th>
              {columns.map((c, col) => (
                <td
                  key={c.name}
                  className={`relative border-r border-b border-[#d0d7e5] px-0.5 pt-0.5 pb-0 whitespace-nowrap text-black ${
                    row > 4 && rightAligned.includes(col) ? "text-right" : "text-left"
                  }`}
                >
                  {cellText(row, col)}
                  {row === 12 && c.name === "H" && (
                    <span className="pointer-events-none absolute -left-0.5 -top-0.5 h-[23px] w-[83px] border-3 border-black">
                      <span className="absolute -right-1 -bottom-1 size-[6px] border-t border-l border-white bg-black" />
                    </span>
                  )}
                </td>
              ))}
            </tr>
          ))}
        </tbody>
      </table>
      <CommentNote />
    </div>
  );
}

function VerticalScroll() {
  return (
    <div className="flex w-5 shrink-0 flex-col border-r-4 border-[#a9c4ea] bg-[#7b9ccb]">
      <div className="flex h-2 items-center justify-center border border-[#7d9cc6] bg-white">
        <span className="h-px w-2 bg-[#5b7fb5]" />
      </div>
      <button type="button" aria-label="Scroll up" className="flex h-[17px] items-center justify-center">
        <Svg w={9} h={5}>
          <path d="M0 5L4.500 0 9 5z" fill="#3d5480" />
        </Svg>
      </button>
      <div className="flex w-full flex-[450] items-center justify-center rounded-[2px] border border-[#4a6798] bg-linear-to-r from-[#f2f5f9] via-[#d6dee8] to-[#b2c1d3]">
        <Svg w={8} h={8}>
          <path d="M0 0.500h8M0 2.500h8M0 4.500h8M0 6.500h8" stroke="#73839b" />
        </Svg>
      </div>
      <div className="flex-[41]" />
      <button type="button" aria-label="Scroll down" className="flex h-[17px] items-center justify-center">
        <Svg w={9} h={5}>
          <path d="M0 0h9L4.500 5z" fill="#3d5480" />
        </Svg>
      </button>
    </div>
  );
}

function Slant({ fill = "transparent", last = false }: { fill?: string; last?: boolean }) {
  return (
    <Svg w={14} h={16}>
      <path d="M0 16L14 0H0z" fill={fill} />
      {last && <path d="M0 16L14 0v16z" fill="#93afdb" />}
      <path d="M-0.500 15.500L13.500 0.500" stroke="#7393c4" />
      <path d="M1 16L14.500 1.500" stroke="#fff" />
    </Svg>
  );
}

function NavArrow({ label, d }: { label: string; d: string }) {
  return (
    <button type="button" aria-label={label} className="flex w-[15px] justify-center">
      <Svg w={8} h={8}>
        <path d={d} fill="#15428b" />
      </Svg>
    </button>
  );
}

function SheetTabs() {
  const tab = "h-full text-left text-[11px] leading-[15px] whitespace-nowrap text-[#15428b]";
  return (
    <div className="flex h-[17px] shrink-0 border-y border-[#6f8fbe] bg-linear-to-b from-[#8dabd8] to-[#a3bde4]">
      <div className="flex items-center bg-linear-to-b from-[#e3eefc] to-[#b9d1f3] pr-0.5">
        <NavArrow label="First sheet" d="M1 0h1.500v8H1zM7 0v8L3 4z" />
        <NavArrow label="Previous sheet" d="M6 0v8L2 4z" />
        <NavArrow label="Next sheet" d="M2 0v8l4-4z" />
        <NavArrow label="Last sheet" d="M5.500 0H7v8H5.500zM1 0v8l4-4z" />
      </div>
      <div role="tablist" className="flex bg-linear-to-b from-[#d9e7fb] to-[#b4cdf1]">
        <button type="button" role="tab" className={`${tab} w-[57px] border-l border-[#7393c4] pl-3`}>Sheet1</button>
        <Slant />
        <button type="button" role="tab" className={`${tab} w-[68px] pl-[3px]`}>Quiz Exam</button>
        <button type="button" role="tab" aria-selected="true" className={`${tab} w-[70px] bg-white pl-[9px] text-[12px] font-bold`}>Discount</button>
        <Slant fill="#fff" />
        <button type="button" role="tab" className={`${tab} w-[47px]`}>Courses</button>
        <Slant />
        <button type="button" role="tab" className={`${tab} w-[79px] pl-0.5`}>CoursePrices</button>
        <Slant />
        <button type="button" role="tab" className={`${tab} w-[71px] pl-0.5`}>Price-hours</button>
        <Slant />
        <button type="button" aria-label="Insert Worksheet" className="w-[17px]">
          <Svg>
            <path d="M5.500 4.500h9v7l-2 2h-7z" fill="#e7f0fd" stroke="#56719e" />
            <path d="M4 0v8M0 4h8M1 1l6 6M7 1L1 7" stroke="#e59a2d" />
            <circle cx="4" cy="4" r="1.500" fill="#fff3a8" />
          </Svg>
        </button>
        <Slant last />
      </div>
      <div className="flex-[252]" />
      <span className="w-[7px] border-2 border-[#eaf2fc] bg-[#5b7fb5]" />
      <button type="button" aria-label="Scroll left" className="flex w-[18px] items-center justify-center bg-[#7b9ccb]">
        <Svg w={5} h={9}>
          <path d="M5 0v9L0 4.500z" fill="#3d5480" />
        </Svg>
      </button>
      <div className="flex flex-[427] items-center justify-center border border-y-0 border-[#4a6798] bg-linear-to-b from-[#f2f5f9] via-[#d6dee8] to-[#b2c1d3]">
        <Svg w={8} h={7}>
          <path d="M0.500 0v7M2.500 0v7M4.500 0v7M6.500 0v7" stroke="#73839b" />
        </Svg>
      </div>
      <div className="flex-[60] bg-[#7b9ccb]" />
      <button type="button" aria-label="Scroll right" className="flex w-[19px] items-center justify-center bg-[#7b9ccb]">
        <Svg w={5} h={9}>
          <path d="M0 0v9l5-4.500z" fill="#3d5480" />
        </Svg>
      </button>
      <span className="w-[7px] border-2 border-[#eaf2fc] bg-[#5b7fb5]" />
      <span className="w-5 border-r-4 border-[#a9c4ea] bg-[#86a5d4]" />
    </div>
  );
}

function StatusBar() {
  const [zoom, setZoom] = useState(100);
  return (
    <div className="flex h-[22px] shrink-0 items-stretch border-b border-[#42597b] bg-linear-to-b from-[#d9e7fb] via-[#b9d3f7] via-45% to-[#d8e6fb] text-[11px] leading-5 text-[#15428b]">
      <span className="w-[47px] pl-[7px]">Ready</span>
      <span className="w-0.5 border-l border-[#8cabd9] bg-white" />
      <div className="flex-1" />
      <div className="flex w-[244px] items-center border-l border-[#6d8fbb] bg-linear-to-b from-[#c3d8f7] via-[#8fb2e8] to-[#a6c5f3] pb-px pl-1">
        <div className="flex h-[18px] overflow-hidden rounded-[2px] border border-[#e4effd] bg-[#a9c2e4]">
          <button type="button" aria-label="Normal" aria-pressed="true" className="flex w-[18px] items-center justify-center bg-linear-to-b from-[#fdd69b] to-[#fee59d]">
            <Svg w={13} h={11}>
              <path d="M0.500 0.500h12v10h-12zM0.500 3.500h12M0.500 7h12M4.500 0.500v10M8.500 0.500v10" fill="#fff" stroke="#5f5f6a" />
            </Svg>
          </button>
          <button type="button" aria-label="Page Layout view" className="flex w-[18px] items-center justify-center">
            <Svg w={13} h={11}>
              <path d="M0.500 0.500h12v10h-12z" fill="#b4b9c2" stroke="#5f5f6a" />
              <path d="M3.500 1.500h6v8h-6z" fill="#fff" stroke="#5f5f6a" />
              <path d="M5 4h3M5 6h3" stroke="#5f5f6a" />
            </Svg>
          </button>
          <button type="button" aria-label="Page Break Preview" className="flex w-[18px] items-center justify-center">
            <Svg w={13} h={11}>
              <path d="M0.500 0.500h12v10h-12z" fill="#b4b9c2" stroke="#5f5f6a" />
              <path d="M1 1h3v6H1zM5.500 1h3v6h-3z" fill="#fff" />
            </Svg>
          </button>
        </div>
        <span className="ml-2 w-9">{zoom}%</span>
        <button type="button" aria-label="Zoom out" onClick={() => setZoom(Math.max(10, zoom - 10))}>
          <Svg>
            <circle cx="8" cy="8" r="7" fill="#e4ecf8" stroke="#5877a8" />
            <path d="M4.500 8h7" stroke="#33496f" strokeWidth="2" />
          </Svg>
        </button>
        <input
          type="range"
          aria-label="Zoom"
          min={10}
          max={190}
          value={zoom}
          onChange={(e) => setZoom(Number(e.target.value))}
          className="h-4 min-w-0 flex-1 appearance-none bg-[linear-gradient(#4b6ca6,#4b6ca6)] bg-[length:100%_1px] bg-center bg-no-repeat [&::-webkit-slider-thumb]:h-3 [&::-webkit-slider-thumb]:w-[9px] [&::-webkit-slider-thumb]:appearance-none [&::-webkit-slider-thumb]:rounded-b-full [&::-webkit-slider-thumb]:border [&::-webkit-slider-thumb]:border-[#4b6ca6] [&::-webkit-slider-thumb]:bg-[#e4ecf8]"
        />
        <button type="button" aria-label="Zoom in" className="mr-[5px]" onClick={() => setZoom(Math.min(190, zoom + 10))}>
          <Svg>
            <circle cx="8" cy="8" r="7" fill="#e4ecf8" stroke="#5877a8" />
            <path d="M4 8h8M8 4v8" stroke="#33496f" strokeWidth="2" />
          </Svg>
        </button>
      </div>
    </div>
  );
}

/* ---------- taskbar ---------- */

function OfficeApp({ color, children }: { color: string; children: ReactNode }) {
  return (
    <Svg>
      <path d="M0.500 4.500c0-2.500 1.500-4 4-4h10v13.500h-10.500c-2 0-3.500-1-3.500-3.500z" fill={color} stroke={color} />
      <path d="M13.500 2H5C3 2 2 3 2 5v6.500" fill="none" stroke="#fff" strokeOpacity="0.750" />
      <path d="M4 3.500h11.500v11L13 15.500H4z" fill="#fff" stroke={color} strokeOpacity="0.600" />
      {children}
    </Svg>
  );
}

function AdobeApp({ color, ink, name }: { color: string; ink: string; name: string }) {
  return (
    <Svg>
      <path d="M0 0h16v16H0z" fill={color} />
      <path d="M0 0h16l-1.500 1.500H1.500v13L0 16z" fill="#fff" opacity="0.2" />
      <text x="8" y="11.500" textAnchor="middle" fontSize="9" fontWeight="600" fontFamily="Open Sans" fill={ink}>
        {name}
      </text>
    </Svg>
  );
}

function Smiley() {
  return (
    <Svg>
      <circle cx="8" cy="8" r="7.300" fill="#f9b71c" stroke="#c46f10" />
      <ellipse cx="8" cy="4.500" rx="5" ry="2.800" fill="#fde27a" />
      <path d="M5.500 3.500v3M10.500 3.500v3" stroke="#3b1d05" strokeWidth="1.700" />
      <path d="M2.500 8h11c0 3-2.500 5.500-5.500 5.500S2.500 11 2.500 8z" fill="#8e1a10" />
      <path d="M3.500 8.500h9v2h-9z" fill="#fff" />
    </Svg>
  );
}

const apps: { name: string; framed?: boolean; active?: boolean; icon: ReactNode }[] = [
  {
    name: "Windows Explorer",
    framed: true,
    icon: (
      <Svg>
        <path d="M1 3h5l1 2h8v9H1z" fill="#f1d886" stroke="#c6a145" />
        <path d="M3 5h10v3H3z" fill="#9fd08e" />
        <path d="M1 7h14v7H1z" fill="#f8e9ae" />
        <path d="M4 15v-4h8v4h-2.500v-2h-3v2z" fill="#5fb3dd" stroke="#3b8dbd" strokeWidth="0.600" />
      </Svg>
    ),
  },
  {
    name: "Firefox",
    framed: true,
    icon: (
      <Svg>
        <circle cx="8" cy="8" r="7.700" fill="#d9611a" />
        <circle cx="9" cy="6.500" r="5" fill="#2c4f9c" />
        <path d="M8 2c2-1 4 0 5 2-2-1-3-1-5-2z" fill="#6fa3df" />
        <path d="M1 4c-1 7 4 10 8 9s5-4 4-7c3 2 2 9-5 9.500C2 15.500-.500 9 1 4z" fill="#f5a52a" />
        <path d="M2 3c2 2 4 1.500 6 2.500-1 1.500-3 1-3 3 0 1 2 2 4 1-1 3-7 2-7-6.500z" fill="#f28c1f" />
      </Svg>
    ),
  },
  { name: "Messenger", framed: true, icon: <Smiley /> },
  {
    name: "Access",
    icon: (
      <OfficeApp color="#a23a63">
        <circle cx="11.500" cy="7" r="2" fill="none" stroke="#a23a63" strokeWidth="1.800" />
        <path d="M10 8.500L5.500 13M7 11l1.500 1.500" stroke="#a23a63" strokeWidth="1.800" />
      </OfficeApp>
    ),
  },
  {
    name: "Excel",
    active: true,
    icon: (
      <OfficeApp color="#2f8a3c">
        <path d="M6.500 6l6.500 7M13 6l-7 7" stroke="#1e7a2e" strokeWidth="2.200" />
      </OfficeApp>
    ),
  },
  {
    name: "Project",
    icon: (
      <OfficeApp color="#4f9a2c">
        <path d="M6 5.500h6v3H6zM8.500 10.500h5v3h-5zM7 8.500v3.500h1.500" fill="#d8efc0" stroke="#4f9a2c" strokeWidth="1.300" />
      </OfficeApp>
    ),
  },
  {
    name: "InfoPath",
    icon: (
      <OfficeApp color="#6a48a8">
        <path d="M6 6.500h6M6 10h4M12 6v7M10 11l2 2.500 2-2.500" fill="none" stroke="#6a48a8" strokeWidth="1.600" />
      </OfficeApp>
    ),
  },
  {
    name: "OneNote",
    icon: (
      <OfficeApp color="#8a3a8c">
        <text x="6" y="13.500" fontSize="13" fontWeight="700" fontStyle="italic" fontFamily="Liberation Serif" fill="#7b2f80">n</text>
      </OfficeApp>
    ),
  },
  {
    name: "Outlook",
    icon: (
      <OfficeApp color="#e0962a">
        <circle cx="10" cy="9.500" r="5" fill="#fbe3a8" stroke="#d98a1e" />
        <path d="M7 8l3 3 3-3" fill="none" stroke="#b96e12" strokeWidth="1.500" />
      </OfficeApp>
    ),
  },
  {
    name: "PowerPoint",
    icon: (
      <OfficeApp color="#d9532c">
        <circle cx="9.500" cy="9.500" r="3" fill="none" stroke="#d9532c" strokeWidth="2.200" />
        <path d="M9.500 9.500h4.500V6" fill="none" stroke="#d9532c" strokeWidth="1.500" />
      </OfficeApp>
    ),
  },
  {
    name: "Publisher",
    icon: (
      <OfficeApp color="#2c8374">
        <path d="M8 6.500h5M8 9h5M8 11.500h5M6.500 5v9" stroke="#2c8374" strokeWidth="1.500" />
      </OfficeApp>
    ),
  },
  {
    name: "Word",
    icon: (
      <OfficeApp color="#3b62b0">
        <text x="4.500" y="13" fontSize="11" fontWeight="700" fontStyle="italic" fontFamily="Liberation Serif" fill="#234c9c">W</text>
      </OfficeApp>
    ),
  },
  {
    name: "Contacts",
    icon: (
      <Svg>
        <path d="M1.500 1.500h13v13h-13z" fill="#f4f1ee" stroke="#4a5a8a" />
        <circle cx="8" cy="5.500" r="2.800" fill="#8b7460" stroke="#222" />
        <path d="M4.500 14c0-6 7-6 7 0z" fill="#c9782e" stroke="#222" />
      </Svg>
    ),
  },
  {
    name: "Circuit",
    icon: (
      <Svg>
        <path d="M0.500 2.500h15v11h-15z" fill="#147a1c" stroke="#d8e4b8" />
        <path d="M1 5.500h14M1 8h14M1 10.500h14" stroke="#0a2a0a" strokeDasharray="2 1" />
        <path d="M5 4v8M10 4v8" stroke="#3cc048" strokeDasharray="1 1" />
      </Svg>
    ),
  },
  {
    name: "Stamp",
    icon: (
      <Svg>
        <path d="M0.500 0.500h15v15h-15z" fill="#c83a3a" />
        <path d="M2.500 2.500h11v11h-11z" fill="#f6dcdc" stroke="#fff" />
        <path d="M5 5h6v6H5zM5 5l6 6M11 5l-3 3" fill="none" stroke="#b82424" strokeWidth="1.300" />
      </Svg>
    ),
  },
  {
    name: "Paint",
    icon: (
      <Svg>
        <path d="M8 3l5-2 2 3-3 6-5 4-5 1-2-4 3-5z" fill="#17c7cf" stroke="#111" />
        <path d="M10.500.500h5V5l-3 1.500-3-3zM.500 11l4.500 4-2 .500H.500z" fill="#f3e52e" stroke="#111" />
        <path d="M8 7l3 1M10 5.500v4M4 8v4l3-.500" fill="none" stroke="#06496b" strokeWidth="1.300" />
      </Svg>
    ),
  },
  {
    name: "Notepad",
    icon: (
      <Svg>
        <path d="M1 1h11l2 3v11H1z" fill="#f5f6ee" stroke="#b7bbaa" />
        <path d="M3 4h8M3 6.500h8M3 9h6M3 11.500h7" stroke="#9aa0a8" />
        <path d="M15.500 1.500L8 10l-1 2.500L9.500 11 16 3.500z" fill="#e8b02e" stroke="#7d5a12" strokeWidth="0.700" />
      </Svg>
    ),
  },
  {
    name: "FoxPro",
    icon: (
      <Svg>
        <path d="M2 1l4 4 4 1 5-2-2 5-3 4-6 2-2-4 1-3z" fill="#f2a01e" />
        <path d="M6 5l3 6-4 3M10 6l-1 5" fill="none" stroke="#c96a10" />
      </Svg>
    ),
  },
  {
    name: "Picasa",
    icon: (
      <Svg>
        <path d="M0 0h16v16H0z" fill="#fff" />
        <path d="M1 1h5L1 6z" fill="#b03ab0" />
        <path d="M7 1h3v7z" fill="#8b3aa8" />
        <path d="M7 1l4 8H6z" fill="#e03a2f" />
        <path d="M11 1h4v7z" fill="#d8281c" />
        <path d="M15 10v5H7v-5z" fill="#2b9d3c" />
        <path d="M1 9l5-4v10H1z" fill="#2d6fd2" />
        <path d="M7 15v-5h4v5z" fill="#f0b51c" />
      </Svg>
    ),
  },
  { name: "Dreamweaver", icon: <AdobeApp color="#5f7d1c" ink="#d3f06a" name="Dw" /> },
  { name: "Bridge", icon: <AdobeApp color="#a84a1e" ink="#2d1206" name="Br" /> },
  { name: "Photoshop", icon: <AdobeApp color="#0f62a6" ink="#8fe0ff" name="Ps" /> },
  { name: "Flash", icon: <AdobeApp color="#b51f24" ink="#ffc9c0" name="Fl" /> },
  {
    name: "Flash Player",
    icon: (
      <Svg>
        <circle cx="8" cy="8" r="7.500" fill="#d8281c" stroke="#8d150d" />
        <path d="M12 3.500c-4 0-4 4-5 6.500-.500 1.500-1.500 2.500-3 2.500M6.500 8h4" fill="none" stroke="#fff" strokeWidth="1.800" />
      </Svg>
    ),
  },
  {
    name: "Shell",
    icon: (
      <Svg>
        <circle cx="8" cy="8" r="7.500" fill="#f4f1ea" stroke="#d8822c" />
        <path d="M1 10c2 7 12 7 14 0-4 2-10 2-14 0z" fill="#e5711d" />
        <path d="M8 15V1M7 14L4.500 2M9 14l2.500-12M6 14L1.500 6M10 14l4.500-8" stroke="#e88b33" strokeWidth="1.200" />
      </Svg>
    ),
  },
  {
    name: "Keys",
    icon: (
      <Svg>
        <path d="M0.500 0.500h15v15h-15z" fill="#2a50b8" stroke="#16307c" />
        <path d="M1 1h14v4C9 5 5 8 1 12z" fill="#6f92e6" />
        <circle cx="10" cy="5.500" r="2.500" fill="none" stroke="#fff" strokeWidth="1.500" />
        <path d="M8.500 7.500l-4.500 5M5 11l1.500 1.500" stroke="#fff" strokeWidth="1.500" />
      </Svg>
    ),
  },
  {
    name: "Clip",
    icon: (
      <Svg>
        <path d="M2.500 0.500h8l3 3v12h-11z" fill="#fff" stroke="#000" />
        <path d="M6 3h4v4H7v2H4V6zM4 10h8v4H4zM8 10v4" fill="#5cc9b5" stroke="#000" />
      </Svg>
    ),
  },
  {
    name: "TeamViewer",
    icon: (
      <Svg>
        <path d="M1 1h12l2 2v12H3l-2-2z" fill="#1a83d6" />
        <circle cx="8" cy="8" r="5.500" fill="#fff" />
        <path d="M3 8l3.500-2.500v1.700h3V5.500L13 8l-3.500 2.500V8.800h-3v1.700z" fill="#1a6fc0" />
      </Svg>
    ),
  },
  {
    name: "Camera",
    icon: (
      <Svg>
        <path d="M0.500 2.500h15v12h-15z" fill="#a9adb2" stroke="#6d7178" />
        <circle cx="8" cy="8.500" r="4.500" fill="#e2e6ea" stroke="#6d7178" />
        <circle cx="8" cy="8.500" r="2.300" fill="#7f9db0" stroke="#4d5560" />
      </Svg>
    ),
  },
  {
    name: "Sketch",
    icon: (
      <Svg>
        <path d="M0.500 0.500h15v15h-15z" fill="#fff" stroke="#a01818" />
        <path d="M8 15V1h7v14z" fill="#f1d4d4" />
        <circle cx="4.500" cy="4.500" r="1.800" fill="none" stroke="#a01818" />
        <circle cx="11.500" cy="4" r="1.500" fill="none" stroke="#a01818" />
        <path d="M6.300 5v4l-2.500 1.500M5 12.500h6" fill="none" stroke="#a01818" strokeWidth="1.500" />
      </Svg>
    ),
  },
  {
    name: "iTunes",
    icon: (
      <Svg>
        <circle cx="8" cy="8" r="7.300" fill="#8fa2b5" stroke="#2f3d50" />
        <circle cx="8" cy="8" r="5.500" fill="#14528c" />
        <path d="M6.500 11V5l4-1v6" fill="none" stroke="#a9e0ff" strokeWidth="1.300" />
        <circle cx="5.700" cy="11" r="1.300" fill="#a9e0ff" />
        <circle cx="9.700" cy="10" r="1.300" fill="#a9e0ff" />
      </Svg>
    ),
  },
];

function StartButton() {
  return (
    <button type="button" aria-label="Start" className="absolute -top-1.5 left-2">
      <Svg w={38} h={36}>
        <defs>
          <radialGradient id="start" cx="50%" cy="85%" r="80%">
            <stop offset="0" stopColor="#4fd0f5" />
            <stop offset="0.45" stopColor="#1b6aa8" />
            <stop offset="1" stopColor="#173d66" />
          </radialGradient>
        </defs>
        <circle cx="19" cy="18" r="17.500" fill="url(#start)" stroke="#2a4561" />
        <path d="M3 16a16 16 0 0 1 32 0c-9-3-23-3-32 0z" fill="#fff" opacity="0.3" />
        <path d="M10 9.500c3-2 6-1.500 8.500 0L16.500 17c-3-1.500-5.500-1.500-8.500 0z" fill="#ea5a28" />
        <path d="M19.500 10c3 1.500 6 1.500 9-.500l-2 8c-3 1.500-6 1.500-9 0z" fill="#8cc63f" />
        <path d="M7.500 18.500c3-1.500 6-1.500 8.500 0l-2 7.500c-2.500-1.500-5.500-1.500-8 0z" fill="#4aa3e2" />
        <path d="M17.500 19c3 1.500 6 1.500 9 0l-2 7.500c-3 2-6 1.500-9 0z" fill="#fbd234" />
      </Svg>
    </button>
  );
}

function Taskbar() {
  return (
    <div className="relative flex h-[29px] shrink-0 items-stretch bg-[#a7c0dc]">
      <StartButton />
      <div className="w-[59px] shrink-0 bg-[#8397b1]" />
      <div className="flex flex-1">
        {apps.map((app) => (
          <button key={app.name} type="button" aria-label={app.name} title={app.name} className="w-[34px] shrink-0 px-px">
            <span
              className={`flex h-full items-center justify-center pb-px ${
                app.active
                  ? "rounded-[2px] border border-[#7d8fa8] bg-linear-to-br from-[#f5f8fb] to-[#cbd9e8]"
                  : app.framed
                    ? "rounded-[2px] border border-[#63758f] bg-linear-to-br from-[#d8e2ee] to-[#a4bad3] shadow-[inset_1px_1px_0_#eef3f8]"
                    : ""
              }`}
            >
              {app.icon}
            </span>
          </button>
        ))}
      </div>
      <div className="flex w-4 flex-col items-center justify-between border border-[#d2deeb] bg-[#a9bfd8] py-1">
        <Svg w={7} h={4}>
          <path d="M0 4l3.500-4L7 4z" fill="#dfe9f4" />
        </Svg>
        <Svg w={7} h={4}>
          <path d="M0 0l3.500 4L7 0z" fill="#dfe9f4" />
        </Svg>
      </div>
      <div className="flex w-[233px] items-center bg-[#8093ab] pl-[7px] text-white">
        <button type="button" aria-label="Show hidden icons">
          <Svg w={8} h={5}>
            <path d="M0 5l4-5 4 5z" fill="#fff" />
          </Svg>
        </button>
        <span className="ml-3">
          <Smiley />
        </span>
        <Svg className="ml-2">
          <path d="M6 2.500H2.500v12h8V12" fill="none" stroke="#fff" strokeWidth="1.500" />
          <path d="M7 5h8v3c0 2-1 3-3 3.500V16h-2v-4.500C8 11 7 10 7 8zM8 1h2v4H8zM12 1h2v4h-2z" fill="#fff" />
        </Svg>
        <span className="ml-2 w-[15px] text-[12px] leading-4 text-[#c8141c]">76</span>
        <Svg className="ml-2">
          <path d="M5.500 4.500h9.500v7H5.500z" fill="#6c7f97" stroke="#fff" strokeWidth="1.500" />
          <path d="M7 14.500h7M10.500 11.500v3M0.500 1v4h3v9h3M1 1v2M3.500 1v2" fill="none" stroke="#fff" strokeWidth="1.500" />
        </Svg>
        <Svg className="ml-2">
          <path d="M1 5.500h3L8 2v12l-4-3.500H1z" fill="#dde4ec" stroke="#fff" />
          <path d="M10 5.500c1.500 1.500 1.500 3.500 0 5M12 3.500c2.500 2.500 2.500 6.500 0 9M14 2c3 3.500 3 8.500 0 12" fill="none" stroke="#fff" />
        </Svg>
        <span className="ml-[18px] flex-1 text-[12px] leading-4 whitespace-nowrap">10:11 PM</span>
        <button type="button" aria-label="Show desktop" className="h-full w-3.5 border border-[#b9c7d6] bg-linear-to-br from-[#94a3b5] to-[#414c59]" />
      </div>
    </div>
  );
}

export default function App() {
  return (
    <div className="flex h-screen flex-col overflow-hidden bg-[#bfdbff] font-['Open_Sans','Noto_Sans',sans-serif]">
      <header className="relative flex shrink-0 flex-col">
        <OfficeButton />
        <TitleBar />
        <TabStrip />
        <Ribbon />
      </header>
      <FormulaBar />
      <main className="flex min-h-0 flex-1">
        <Sheet />
        <VerticalScroll />
      </main>
      <SheetTabs />
      <StatusBar />
      <Taskbar />
    </div>
  );
}
